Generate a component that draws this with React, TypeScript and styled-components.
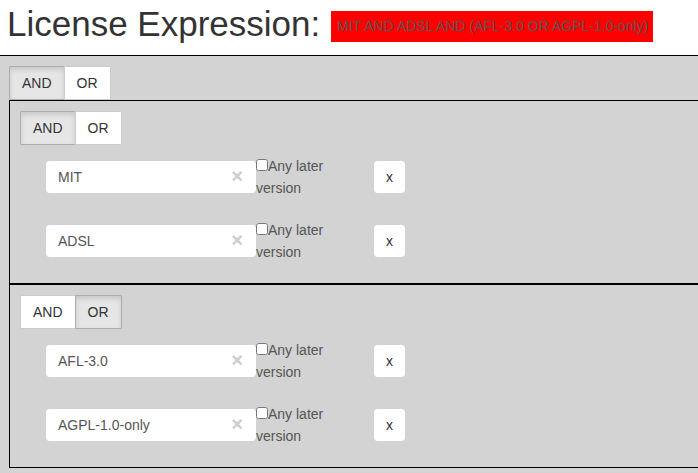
import React from "react";
import styled, { createGlobalStyle } from "styled-components";

const GlobalStyle = createGlobalStyle`
  html, body {
    margin: 0;
    padding: 0;
    overflow: hidden;
    background: #ffffff;
  }
  body {
    font-family: "Liberation Sans", Arial, Helvetica, sans-serif;
    font-size: 14px;
    color: #333333;
  }
`;

const Header = styled.header`
  display: flex;
  align-items: flex-start;
  height: 55px;
  padding-left: 7px;
  border-bottom: 1px solid #000000;
`;

const Title = styled.h1`
  margin: 4px 0 0 0;
  font-size: 35px;
  line-height: 40px;
  font-weight: 400;
  color: #333333;
  white-space: nowrap;
`;

const ExpressionBadge = styled.span`
  margin: 11px 0 0 11px;
  padding: 6px 5px 6px 6px;
  line-height: 19px;
  font-size: 14px;
  background: #ff0000;
  color: #555555;
  white-space: nowrap;
`;

const Panel = styled.main`
  box-sizing: border-box;
  background: #d3d3d3;
  padding: 10px 0 0 9px;
  height: calc(100vh - 56px);
`;

const ToggleGroup = styled.div`
  display: flex;
`;

const ToggleButton = styled.button<{ $active?: boolean }>`
  font-family: inherit;
  font-size: 14px;
  line-height: 20px;
  padding: 6px 12px;
  margin: 0 0 0 -1px;
  color: #333333;
  border: 1px solid ${(p) => (p.$active ? "#adadad" : "#cccccc")};
  border-radius: 0;
  background: ${(p) => (p.$active ? "#e6e6e6" : "#ffffff")};
  box-shadow: ${(p) => (p.$active ? "inset 0 3px 5px rgba(0, 0, 0, 0.125)" : "none")};
  cursor: pointer;
  &:first-child {
    margin-left: 0;
    border-radius: 1px 0 0 1px;
  }
  &:last-child {
    border-radius: 0 1px 1px 0;
  }
`;

const GroupBox = styled.section`
  border: 1px solid #000000;
  margin-right: -20px;
  padding: 10px 0 20px 10px;
`;

const RowList = styled.div`
  display: flex;
  flex-direction: column;
  gap: 20px;
  margin-top: 10px;
`;

const Row = styled.div`
  display: flex;
  align-items: center;
  padding-left: 26px;
`;

const SelectBox = styled.div`
  display: flex;
  align-items: center;
  justify-content: space-between;
  box-sizing: border-box;
  width: 210px;
  height: 32px;
  padding: 0 13px 0 12px;
  background: #ffffff;
  border-radius: 4px;
`;

const SelectValue = styled.span`
  color: #555555;
  font-size: 14px;
`;

const ClearMark = styled.span`
  color: #cccccc;
  font-size: 20px;
  font-weight: 700;
  line-height: 1;
  margin-top: -2px;
`;

const LaterLabel = styled.label`
  display: block;
  width: 104px;
  margin-right: 14px;
  line-height: 22px;
  font-size: 14px;
  color: #555555;
`;

const Checkbox = styled.input`
  margin: 0;
  width: 12px;
  height: 12px;
  vertical-align: baseline;
`;

const RemoveButton = styled.button`
  font-family: inherit;
  font-size: 14px;
  width: 31px;
  height: 32px;
  padding: 0;
  border: none;
  border-radius: 4px;
  background: #ffffff;
  color: #333333;
  cursor: pointer;
`;

type Group = { op: "AND" | "OR"; items: string[] };

const groups: Group[] = [
  { op: "AND", items: ["MIT", "ADSL"] },
  { op: "OR", items: ["AFL-3.0", "AGPL-1.0-only"] },
];

function Toggle({ op }: { op: "AND" | "OR" }) {
  return (
    <ToggleGroup>
      <ToggleButton $active={op === "AND"}>AND</ToggleButton>
      <ToggleButton $active={op === "OR"}>OR</ToggleButton>
    </ToggleGroup>
  );
}

export default function App() {
  return (
    <>
      <GlobalStyle />
      <Header>
        <Title>License Expression:</Title>
        <ExpressionBadge>MIT AND ADSL AND (AFL-3.0 OR AGPL-1.0-only)</ExpressionBadge>
      </Header>
      <Panel>
        <Toggle op="AND" />
        {groups.map((g, gi) => (
          <GroupBox key={gi}>
            <Toggle op={g.op} />
            <RowList>
              {g.items.map((item) => (
                <Row key={item}>
                  <SelectBox>
                    <SelectValue>{item}</SelectValue>
                    <ClearMark>×</ClearMark>
                  </SelectBox>
                  <LaterLabel>
                    <Checkbox type="checkbox" />
                    Any later version
                  </LaterLabel>
                  <RemoveButton>x</RemoveButton>
                </Row>
              ))}
            </RowList>
          </GroupBox>
        ))}
      </Panel>
    </>
  );
}
